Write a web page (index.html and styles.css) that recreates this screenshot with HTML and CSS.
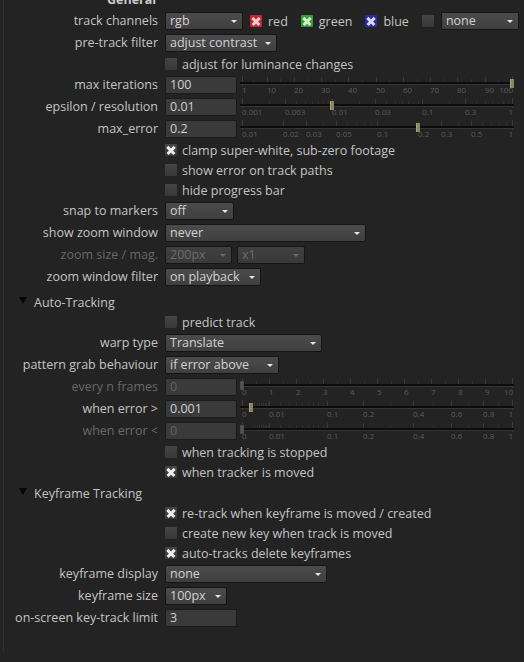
FILE: index.html
```html
<!DOCTYPE html>
<html>
<head>
<meta charset="utf-8">
<title>Tracker</title>
<link rel="stylesheet" href="styles.css">
</head>
<body>
<div class="panel">
  <div class="general">General</div>

  <div class="row ctl">
    <div class="lbl">track channels</div>
    <div class="ctls">
      <div class="dd w78"><span>rgb</span><i class="arr"></i></div>
      <div class="chan gap-first"><span class="cb x red"></span><span>red</span></div>
      <div class="chan"><span class="cb x green"></span><span>green</span></div>
      <div class="chan"><span class="cb x blue"></span><span>blue</span></div>
      <span class="cb lone"></span>
      <div class="dd w78 after-lone"><span>none</span><i class="arr"></i></div>
    </div>
  </div>

  <div class="row ctl">
    <div class="lbl">pre-track filter</div>
    <div class="ctls"><div class="dd w112"><span>adjust contrast</span><i class="arr"></i></div></div>
  </div>

  <div class="row chk">
    <div class="lbl"></div>
    <div class="ctls"><span class="cb"></span><span class="cbt">adjust for luminance changes</span></div>
  </div>

  <div class="row ctl">
    <div class="lbl">max iterations</div>
    <div class="ctls">
      <div class="inp">100</div>
      <div class="slider" data-scale="lin" data-min="1" data-max="100" data-value="100"
           data-labels="1,10,20,30,40,50,60,70,80,90,100"
           data-ticks="5,15,25,35,45,55,65,75,85,95"></div>
    </div>
  </div>

  <div class="row ctl">
    <div class="lbl">epsilon / resolution</div>
    <div class="ctls">
      <div class="inp">0.01</div>
      <div class="slider" data-scale="log" data-min="0.001" data-max="1" data-value="0.01"
           data-labels="0.001,0.003,0.01,0.03,0.1,0.3,1"
           data-ticks="0.002,0.004,0.005,0.006,0.007,0.008,0.009,0.02,0.04,0.05,0.06,0.07,0.08,0.09,0.2,0.4,0.5,0.6,0.7,0.8,0.9"></div>
    </div>
  </div>

  <div class="row ctl">
    <div class="lbl">max_error</div>
    <div class="ctls">
      <div class="inp">0.2</div>
      <div class="slider" data-scale="log" data-min="0.01" data-max="1" data-value="0.2"
           data-labels="0.01,0.02,0.03,0.05,0.1,0.2,0.3,0.5,1"
           data-ticks="0.04,0.06,0.07,0.08,0.09,0.4,0.6,0.7,0.8,0.9"></div>
    </div>
  </div>

  <div class="row chk">
    <div class="lbl"></div>
    <div class="ctls"><span class="cb x"></span><span class="cbt">clamp super-white, sub-zero footage</span></div>
  </div>
  <div class="row chk">
    <div class="lbl"></div>
    <div class="ctls"><span class="cb"></span><span class="cbt">show error on track paths</span></div>
  </div>
  <div class="row chk">
    <div class="lbl"></div>
    <div class="ctls"><span class="cb"></span><span class="cbt">hide progress bar</span></div>
  </div>

  <div class="row ctl">
    <div class="lbl">snap to markers</div>
    <div class="ctls"><div class="dd w69"><span>off</span><i class="arr"></i></div></div>
  </div>
  <div class="row ctl">
    <div class="lbl">show zoom window</div>
    <div class="ctls"><div class="dd w201"><span>never</span><i class="arr"></i></div></div>
  </div>
  <div class="row ctl">
    <div class="lbl dis">zoom size / mag.</div>
    <div class="ctls">
      <div class="dd dis w67"><span>200px</span><i class="arr"></i></div>
      <div class="dd dis w68 next"><span>x1</span><i class="arr"></i></div>
    </div>
  </div>
  <div class="row ctl">
    <div class="lbl">zoom window filter</div>
    <div class="ctls"><div class="dd w96"><span>on playback</span><i class="arr"></i></div></div>
  </div>

  <div class="sec first"><i class="tri"></i><span>Auto-Tracking</span></div>

  <div class="row chk">
    <div class="lbl"></div>
    <div class="ctls"><span class="cb"></span><span class="cbt">predict track</span></div>
  </div>
  <div class="row ctl">
    <div class="lbl">warp type</div>
    <div class="ctls"><div class="dd w157"><span>Translate</span><i class="arr"></i></div></div>
  </div>
  <div class="row ctl">
    <div class="lbl">pattern grab behaviour</div>
    <div class="ctls"><div class="dd w114"><span>if error above</span><i class="arr"></i></div></div>
  </div>
  <div class="row ctl">
    <div class="lbl dis">every n frames</div>
    <div class="ctls">
      <div class="inp dis">0</div>
      <div class="slider dis" data-scale="lin" data-min="0" data-max="10" data-value="0"
           data-labels="0,1,2,3,4,5,6,7,8,9,10" data-ticks="0.5,1.5,2.5,3.5,4.5,5.5,6.5,7.5,8.5,9.5"></div>
    </div>
  </div>
  <div class="row ctl">
    <div class="lbl">when error &gt;</div>
    <div class="ctls">
      <div class="inp">0.001</div>
      <div class="slider" data-scale="sqrt" data-min="0" data-max="1" data-value="0.001"
           data-labels="0,0.01,0.1,0.2,0.4,0.6,0.8,1"
           data-ticks="0.002,0.003,0.004,0.005,0.006,0.007,0.008,0.009,0.02,0.03,0.04,0.05,0.06,0.07,0.08,0.09,0.3,0.5,0.7,0.9"></div>
    </div>
  </div>
  <div class="row ctl">
    <div class="lbl dis">when error &lt;</div>
    <div class="ctls">
      <div class="inp dis">0</div>
      <div class="slider dis" data-scale="sqrt" data-min="0" data-max="1" data-value="0"
           data-labels="0,0.01,0.1,0.2,0.4,0.6,0.8,1"
           data-ticks="0.002,0.003,0.004,0.005,0.006,0.007,0.008,0.009,0.02,0.03,0.04,0.05,0.06,0.07,0.08,0.09,0.3,0.5,0.7,0.9"></div>
    </div>
  </div>
  <div class="row chk">
    <div class="lbl"></div>
    <div class="ctls"><span class="cb"></span><span class="cbt">when tracking is stopped</span></div>
  </div>
  <div class="row chk">
    <div class="lbl"></div>
    <div class="ctls"><span class="cb x"></span><span class="cbt">when tracker is moved</span></div>
  </div>

  <div class="sec"><i class="tri"></i><span>Keyframe Tracking</span></div>

  <div class="row chk">
    <div class="lbl"></div>
    <div class="ctls"><span class="cb x"></span><span class="cbt">re-track when keyframe is moved / created</span></div>
  </div>
  <div class="row chk">
    <div class="lbl"></div>
    <div class="ctls"><span class="cb"></span><span class="cbt">create new key when track is moved</span></div>
  </div>
  <div class="row chk">
    <div class="lbl"></div>
    <div class="ctls"><span class="cb x"></span><span class="cbt">auto-tracks delete keyframes</span></div>
  </div>
  <div class="row ctl">
    <div class="lbl">keyframe display</div>
    <div class="ctls"><div class="dd w162"><span>none</span><i class="arr"></i></div></div>
  </div>
  <div class="row ctl">
    <div class="lbl">keyframe size</div>
    <div class="ctls"><div class="dd w62"><span>100px</span><i class="arr"></i></div></div>
  </div>
  <div class="row ctl">
    <div class="lbl">on-screen key-track limit</div>
    <div class="ctls"><div class="inp">3</div></div>
  </div>
</div>
<script src="script.js"></script>
</body>
</html>
```

FILE: styles.css
```css
* { box-sizing: border-box; }
html, body { margin: 0; padding: 0; background: #232323; }
body {
  width: 524px;
  height: 662px;
  overflow: hidden;
  font-family: "Open Sans", "Liberation Sans", sans-serif;
  font-size: 12.5px;
  color: #c4c4c4;
}
.panel {
  margin-left: 3px;
  border-left: 1px solid #2e2e2e;
  height: 662px;
}
.general {
  margin-top: -10px;
  height: 20px;
  line-height: 20px;
  padding-left: 103px;
  font-weight: bold;
  color: #cacaca;
}
.row {
  display: grid;
  grid-template-columns: 154px 1fr;
  column-gap: 7px;
  align-items: center;
}
.ctl { height: 22px; }
.chk { height: 20px; }
.lbl {
  text-align: right;
  white-space: nowrap;
  line-height: 18px;
}
.lbl.dis { color: #686868; }
.ctls {
  display: flex;
  align-items: center;
  height: 100%;
  white-space: nowrap;
}
.dd {
  flex: none;
  height: 18px;
  display: flex;
  align-items: center;
  justify-content: space-between;
  padding: 0 5px 0 4px;
  background: linear-gradient(#4b4b4b, #3f3f3f);
  border: 1px solid #151515;
  border-radius: 2px;
  color: #d2d2d2;
  line-height: 16px;
}
.dd.dis { background: linear-gradient(#404040, #393939); color: #6b6b6b; }
.arr {
  width: 0;
  height: 0;
  border-left: 3px solid transparent;
  border-right: 3px solid transparent;
  border-top: 3px solid #e6e6e6;
}
.dd.dis .arr { border-top-color: #6a6a6a; }
.w62 { width: 62px; }
.w67 { width: 67px; }
.w68 { width: 68px; }
.w69 { width: 69px; }
.w78 { width: 78px; }
.w96 { width: 96px; }
.w112 { width: 112px; }
.w114 { width: 114px; }
.w157 { width: 157px; }
.w162 { width: 162px; }
.w201 { width: 201px; }
.next { margin-left: 5px; }

.inp {
  flex: none;
  width: 72px;
  height: 18px;
  background: #3a3a3a;
  border: 1px solid #1b1b1b;
  border-radius: 2px;
  padding-left: 4px;
  line-height: 16px;
  color: #d0d0d0;
}
.inp.dis { color: #636363; }

.cb {
  flex: none;
  position: relative;
  width: 12px;
  height: 12px;
  background: linear-gradient(#454545, #383838);
  border-radius: 1px;
}
.cb.x::before, .cb.x::after {
  content: "";
  position: absolute;
  left: 1px;
  top: 5px;
  width: 10px;
  height: 2.6px;
  background: #ececec;
  transform: rotate(45deg);
}
.cb.x::after { transform: rotate(-45deg); }
.cb.red { background: #c3262d; }
.cb.red::before, .cb.red::after { background: #f5c9cb; }
.cb.green { background: #3d9a3a; }
.cb.green::before, .cb.green::after { background: #cdf2c8; }
.cb.blue { background: #2b2b9e; }
.cb.blue::before, .cb.blue::after { background: #d6d6fa; }
.cbt { margin-left: 5px; }

.chan { display: flex; align-items: center; gap: 6px; margin-left: 13px; }
.chan.gap-first { margin-left: 7px; }
.lone { margin-left: 13px; }
.after-lone { margin-left: 7px; }

.slider {
  flex: none;
  width: 277px;
  height: 22px;
  margin-left: 2px;
}
.slider svg { display: block; }

.sec {
  display: flex;
  align-items: center;
  height: 20px;
  padding-left: 15px;
  gap: 7px;
  margin-top: 1px;
}
.sec.first { margin-top: 4px; }
.tri {
  width: 0;
  height: 0;
  border-left: 4px solid transparent;
  border-right: 4px solid transparent;
  border-top: 7px solid #070707;
  margin-bottom: 4px;
}
```

FILE: script.js
```js
document.querySelectorAll('.slider').forEach(function (el) {
  var d = el.dataset;
  var min = +d.min, max = +d.max, scale = d.scale;
  var labels = d.labels.split(',');
  var ticks = (d.ticks || '').split(',').filter(Boolean).map(Number);
  var value = +d.value;
  var dis = el.classList.contains('dis');
  var X0 = 3, W = 270;
  function f(v) {
    if (scale === 'log') return Math.log(v / min) / Math.log(max / min);
    if (scale === 'sqrt') return Math.sqrt((v - min) / (max - min));
    return (v - min) / (max - min);
  }
  function px(v) { return X0 + f(v) * W; }
  function sx(v) { return (Math.round(px(v)) + 0.5).toFixed(1); }
  var s = '<svg width="277" height="22" viewBox="0 0 277 22" xmlns="http://www.w3.org/2000/svg">';
  ticks.forEach(function (t) {
    var x = sx(t);
    s += '<line x1="' + x + '" y1="5" x2="' + x + '" y2="8" stroke="#313131" stroke-width="1"/>';
  });
  labels.forEach(function (l) {
    var x = sx(+l);
    s += '<line x1="' + x + '" y1="3" x2="' + x + '" y2="8" stroke="#393939" stroke-width="1"/>';
  });
  s += '<line x1="' + sx(min) + '" y1="2" x2="' + sx(min) + '" y2="12" stroke="#3a3a3a"/>';
  s += '<line x1="' + sx(max) + '" y1="2" x2="' + sx(max) + '" y2="12" stroke="#3a3a3a"/>';
  s += '<rect x="1" y="8" width="274" height="2" fill="#0c0c0c"/>';
  s += '<rect x="1" y="10" width="274" height="1" fill="#353535"/>';
  labels.forEach(function (l, i) {
    var last = i === labels.length - 1;
    var x = last ? (X0 + W + 1) : Math.round(px(+l));
    s += '<text x="' + x + '" y="19" font-family="Open Sans, Liberation Sans, sans-serif" font-size="8" fill="#5b5b5b"' +
      (last ? ' text-anchor="end"' : '') + '>' + l + '</text>';
  });
  var hx = Math.round(px(value)) - 2;
  hx = Math.max(0, Math.min(hx, X0 + W - 1));
  if (dis) {
    s += '<rect x="' + hx + '" y="5" width="4" height="9" fill="#555555" stroke="#2a2a2a" stroke-width="0.5"/>';
  } else {
    s += '<rect x="' + hx + '" y="5" width="4" height="9" fill="#8b8565"/>';
    s += '<rect x="' + hx + '" y="5" width="1" height="9" fill="#a8a282"/>';
  }
  s += '</svg>';
  el.innerHTML = s;
});
```
